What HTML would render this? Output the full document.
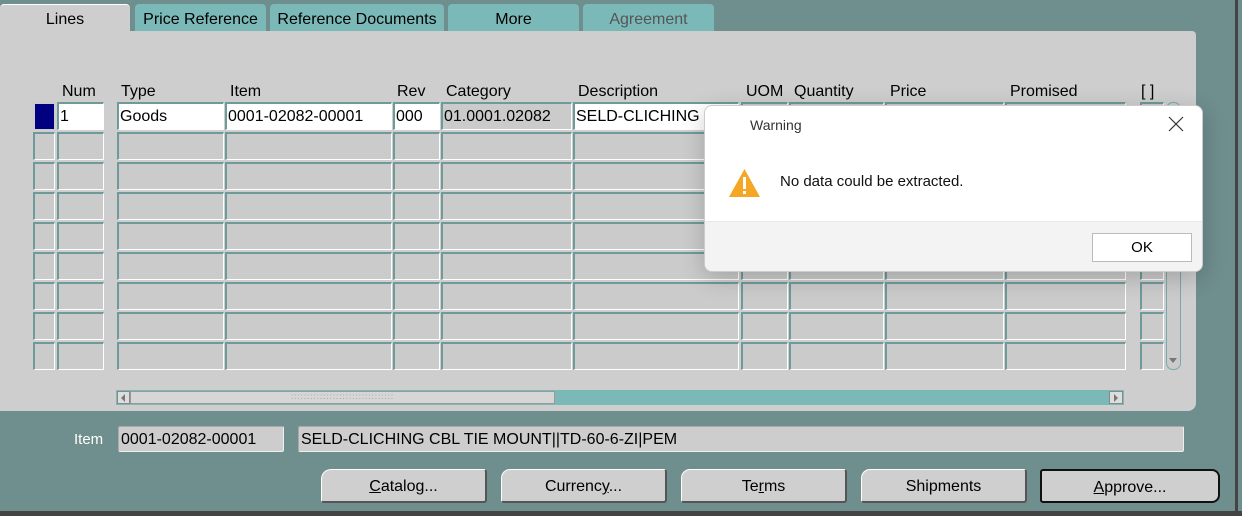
<!DOCTYPE html>
<html><head><meta charset="utf-8"><style>
*{box-sizing:border-box;margin:0;padding:0}
body{width:1242px;height:516px;overflow:hidden;background:#6f8e8e;font-family:"Liberation Sans",Arial,sans-serif;position:relative}
.a{position:absolute}
.tab{position:absolute;top:4px;height:27px;background:#7bb9b9;border-radius:4px 4px 0 0;font-size:16px;text-align:center;line-height:31px;color:#000}
.hd{position:absolute;top:83px;font-size:16px;color:#000}
.c{position:absolute;height:28px;background:#cbcbcb;border-top:2px solid #6e9a9a;border-left:2px solid #6e9a9a;border-bottom:1px solid #fff;border-right:1px solid #fff;font-size:16px;line-height:26px;padding-left:1px;white-space:nowrap;overflow:hidden}
.w{background:#fff}
.btn{position:absolute;top:469px;height:34px;background:#cfcfcf;border-radius:9px 3px 3px 3px;border-top:1px solid #fff;border-left:1px solid #fff;border-right:2px solid #555;border-bottom:2px solid #555;font-size:16px;text-align:center;line-height:33px}
</style></head><body>
<div class="a" style="left:0;top:511px;width:1242px;height:5px;background:#444"></div>
<div class="a" style="left:1235px;top:0;width:3px;height:516px;background:#444"></div>
<div class="a" style="left:0;top:31px;width:1196px;height:380px;background:#cecece;border-radius:0 4px 8px 0"></div>
<div class="a" style="left:0;top:4px;width:130px;height:30px;background:#cecece;border-radius:4px 4px 0 0;border-top:1px solid #fff;font-size:16px;text-align:center;line-height:30px">Lines</div>
<div class="tab" style="left:135px;width:131px">Price Reference</div>
<div class="tab" style="left:270px;width:174px">Reference Documents</div>
<div class="tab" style="left:448px;width:131px">More</div>
<div class="tab" style="left:583px;width:131px;color:#555">Agreement</div>
<div class="hd" style="left:62px">Num</div>
<div class="hd" style="left:121px">Type</div>
<div class="hd" style="left:230px">Item</div>
<div class="hd" style="left:397px">Rev</div>
<div class="hd" style="left:446px">Category</div>
<div class="hd" style="left:578px">Description</div>
<div class="hd" style="left:746px">UOM</div>
<div class="hd" style="left:794px">Quantity</div>
<div class="hd" style="left:890px">Price</div>
<div class="hd" style="left:1010px">Promised</div>
<div class="hd" style="left:1141px">[ ]</div>
<div id="g"></div>
<div class="a" style="left:1166px;top:102px;width:15px;height:268px;border:1px solid #7aa;border-radius:7px;background:#cbcbcb"></div>
<div class="a" style="left:1169px;top:358px;width:0;height:0;border-left:4px solid transparent;border-right:4px solid transparent;border-top:5px solid #777"></div>
<div class="a" style="left:116px;top:390px;width:1008px;height:15px;background:#7bb9b9"></div>
<div class="a" style="left:117px;top:391px;width:13px;height:13px;background:#ddd;border:1px solid #888"></div>
<div class="a" style="left:121px;top:394px;width:0;height:0;border-top:4px solid transparent;border-bottom:4px solid transparent;border-right:4px solid #777"></div>
<div class="a" style="left:130px;top:391px;width:425px;height:13px;background:#d6d6d6;border:1px solid #999;font-size:8px;line-height:9px;text-align:center;color:#999;letter-spacing:1px">::::::::::::::::::::::::::::::::</div>
<div class="a" style="left:1109px;top:391px;width:14px;height:13px;background:#ddd;border:1px solid #888"></div>
<div class="a" style="left:1114px;top:394px;width:0;height:0;border-top:4px solid transparent;border-bottom:4px solid transparent;border-left:4px solid #777"></div>
<div class="a" style="left:74px;top:431px;font-size:15px;color:#fff">Item</div>
<div class="a" style="left:118px;top:426px;width:166px;height:26px;background:#cdcdcd;border:1px solid #aaa;border-right-color:#eee;border-bottom-color:#eee;border-radius:2px;font-size:16px;line-height:25px;padding-left:2px">0001-02082-00001</div>
<div class="a" style="left:298px;top:426px;width:886px;height:26px;background:#cdcdcd;border:1px solid #aaa;border-right-color:#eee;border-bottom-color:#eee;border-radius:2px;font-size:16px;line-height:25px;padding-left:2px">SELD-CLICHING CBL TIE MOUNT||TD-60-6-ZI|PEM</div>
<div class="btn" style="left:321px;width:166px;border-radius:10px 3px 3px 3px"><u>C</u>atalog...</div>
<div class="btn" style="left:501px;width:166px">Currenc<u>y</u>...</div>
<div class="btn" style="left:681px;width:166px">Te<u>r</u>ms</div>
<div class="btn" style="left:861px;width:166px">Shipments</div>
<div class="btn" style="left:1040px;width:180px;border:2px solid #111;border-radius:3px 8px 8px 3px"><u>A</u>pprove...</div>
<div class="a" style="left:704px;top:105px;width:499px;height:167px;background:#fff;border:1px solid #ccc;border-radius:8px;box-shadow:0 6px 24px rgba(0,0,0,.2);overflow:hidden">
 <div class="a" style="left:45px;top:11px;font-size:14px;color:#333">Warning</div>
 <svg class="a" style="left:463px;top:10px" width="16" height="16" viewBox="0 0 16 16"><path d="M1 1L15 15M15 1L1 15" stroke="#333" stroke-width="1.2" fill="none"/></svg>
 <svg class="a" style="left:23px;top:62px" width="33" height="30" viewBox="0 0 33 30"><path d="M16.5 1 L32 29 L1 29 Z" fill="#f5a623"/><rect x="15" y="9" width="3" height="12" fill="#fff"/><rect x="15" y="23" width="3" height="3" fill="#fff"/></svg>
 <div class="a" style="left:75px;top:67px;font-size:15px;color:#111">No data could be extracted.</div>
 <div class="a" style="left:0;top:115px;width:499px;height:52px;background:#f3f3f3;border-top:1px solid #e8e8e8"></div>
 <div class="a" style="left:387px;top:127px;width:100px;height:29px;background:#fff;border:1px solid #bbb;font-size:15px;text-align:center;line-height:28px">OK</div>
</div>
<script>
var cols=[[33,22],[57,47],[117,107],[225,167],[393,47],[441,131],[573,166],[741,47],[789,95],[885,119],[1005,121],[1140,24]];
var v=["","1","Goods","0001-02082-00001","000","01.0001.02082","SELD-CLICHING"];
var h="";
for(var r=0;r<9;r++){for(var i=0;i<cols.length;i++){var y=102+r*30;var cls="c";var t="";var st="";
if(r==0){if(i==0)st="background:#000080;border-color:#ccc;";else if(i<=4||i==6){cls+=" w";t=v[i];}else if(i==5)t=v[i];}
h+='<div class="'+cls+'" style="left:'+cols[i][0]+'px;top:'+y+'px;width:'+cols[i][1]+'px;'+st+'">'+t+'</div>';}}
document.getElementById("g").innerHTML=h;
</script>
</body></html>
